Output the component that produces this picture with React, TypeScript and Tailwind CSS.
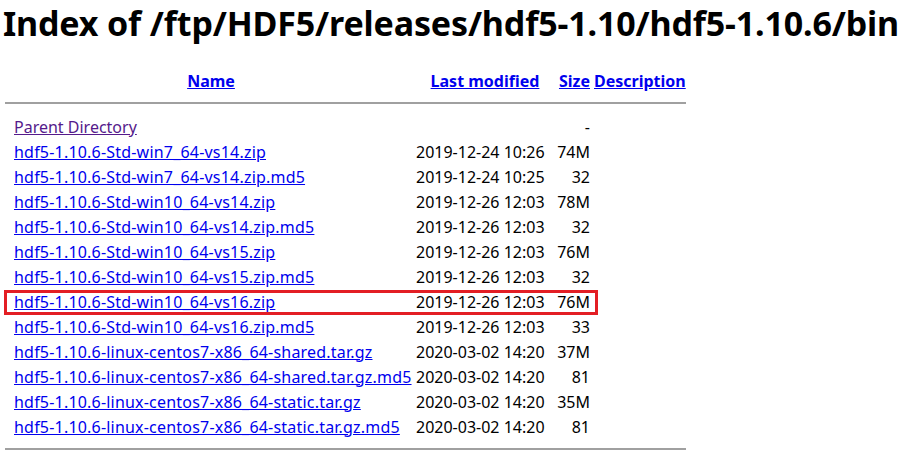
const rows: { name: string; date: string; size: string; boxed?: boolean }[] = [
  { name: 'hdf5-1.10.6-Std-win7_64-vs14.zip', date: '2019-12-24 10:26', size: '74M' },
  { name: 'hdf5-1.10.6-Std-win7_64-vs14.zip.md5', date: '2019-12-24 10:25', size: '32' },
  { name: 'hdf5-1.10.6-Std-win10_64-vs14.zip', date: '2019-12-26 12:03', size: '78M' },
  { name: 'hdf5-1.10.6-Std-win10_64-vs14.zip.md5', date: '2019-12-26 12:03', size: '32' },
  { name: 'hdf5-1.10.6-Std-win10_64-vs15.zip', date: '2019-12-26 12:03', size: '76M' },
  { name: 'hdf5-1.10.6-Std-win10_64-vs15.zip.md5', date: '2019-12-26 12:03', size: '32' },
  { name: 'hdf5-1.10.6-Std-win10_64-vs16.zip', date: '2019-12-26 12:03', size: '76M', boxed: true },
  { name: 'hdf5-1.10.6-Std-win10_64-vs16.zip.md5', date: '2019-12-26 12:03', size: '33' },
  { name: 'hdf5-1.10.6-linux-centos7-x86_64-shared.tar.gz', date: '2020-03-02 14:20', size: '37M' },
  { name: 'hdf5-1.10.6-linux-centos7-x86_64-shared.tar.gz.md5', date: '2020-03-02 14:20', size: '81' },
  { name: 'hdf5-1.10.6-linux-centos7-x86_64-static.tar.gz', date: '2020-03-02 14:20', size: '35M' },
  { name: 'hdf5-1.10.6-linux-centos7-x86_64-static.tar.gz.md5', date: '2020-03-02 14:20', size: '81' },
];

const cols = 'grid grid-cols-[406px_138px_34px_92px] gap-x-[2px]';

export default function App() {
  return (
    <div className="h-[472px] w-[922px] overflow-hidden bg-white text-black [font-family:'Noto_Sans','Open_Sans',sans-serif]">
      <h1 className="whitespace-nowrap pl-[3px] pt-[1px] text-[34px] font-bold leading-[44px] tracking-[-0.15px]">
        Index of /ftp/HDF5/releases/hdf5-1.10/hdf5-1.10.6/bin
      </h1>

      <div className="ml-[8px] mt-[23px] w-[680px] text-[16px]">
        {/* header */}
        <div className={`${cols} h-[25px] items-center font-bold`}>
          <a className="text-center text-[#0000ee] underline">Name</a>
          <a className="text-center text-[#0000ee] underline">Last modified</a>
          <a className="text-right text-[#0000ee] underline">Size</a>
          <a className="pl-[2px] text-left text-[#0000ee] underline">Description</a>
        </div>

        <div className="flex h-[19px] items-center">
          <div className="-ml-[3px] h-[2px] w-[681px] bg-[#a0a0a0]" />
        </div>

        <div className="h-[2px]" />

        <div className={`${cols} h-[25px] items-center`}>
          <a className="pl-[6px] text-[#551a8b] underline">Parent Directory</a>
          <span />
          <span className="text-right">-</span>
          <span />
        </div>

        {rows.map((r) => (
          <div key={r.name} className={`${cols} relative h-[25px] items-center`}>
            <a className="whitespace-nowrap pl-[6px] tracking-[0.2px] text-[#0000ee] underline">{r.name}</a>
            <span className="whitespace-nowrap">{r.date}</span>
            <span className="text-right">{r.size}</span>
            <span />
            {r.boxed && (
              <div className="pointer-events-none absolute left-[-4px] top-[1px] h-[25px] w-[594px] border-[3px] border-[#e31e24]" />
            )}
          </div>
        ))}

        <div className="flex h-[20px] items-center">
          <div className="-ml-[3px] h-[2px] w-[681px] bg-[#a0a0a0]" />
        </div>
      </div>
    </div>
  );
}
